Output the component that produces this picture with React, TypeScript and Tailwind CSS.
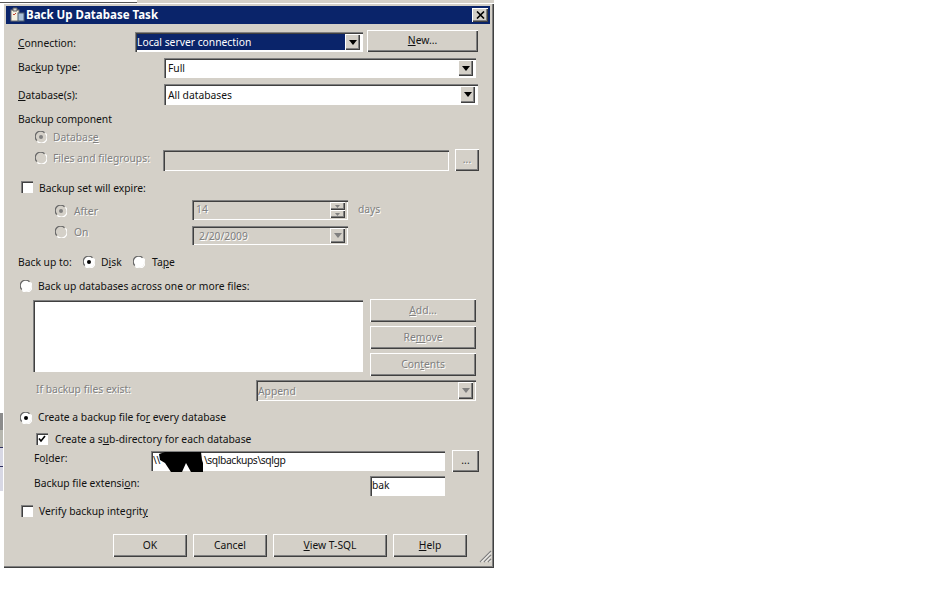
import type { ReactNode } from "react"

const RAISED = "bg-[#d4d0c8] shadow-[inset_1px_1px_0_#ffffff,inset_-1px_-1px_0_#404040,inset_-2px_-2px_0_#808080]"
const SUNKEN = "shadow-[inset_1px_1px_0_#808080,inset_2px_2px_0_#404040,inset_-1px_-1px_0_#ffffff]"
const DISABLED = "text-[#808080] [text-shadow:1px_1px_0_#ffffff]"

function Radio({ on, disabled, className = "" }: { on?: boolean; disabled?: boolean; className?: string }) {
  return (
    <svg width="12" height="12" viewBox="0 0 12 12" className={`shrink-0 ${className}`}>
      <circle cx="6" cy="6" r="5.5" fill={disabled ? "#d4d0c8" : "#ffffff"} />
      <path d="M1.8 9.5A5.3 5.3 0 0 1 9.5 1.8" fill="none" stroke="#6a6a6a" strokeWidth="1.3" />
      <path d="M2.4 10.4A5.3 5.3 0 0 0 10.4 2.4" fill="none" stroke="#ffffff" strokeWidth="1.3" />
      {on && <circle cx="6" cy="6" r="2" fill={disabled ? "#808080" : "#000000"} />}
    </svg>
  )
}

function Check({ on }: { on?: boolean }) {
  return (
    <div className={`w-3 h-3 shrink-0 bg-white flex items-center justify-center ${SUNKEN}`}>
      {on && (
        <svg width="8" height="8" viewBox="0 0 8 8">
          <path d="M1 3.5 3 6 7 1" fill="none" stroke="#000000" strokeWidth="1.6" />
        </svg>
      )}
    </div>
  )
}

function Btn({ className, children, disabled }: { className: string; children: ReactNode; disabled?: boolean }) {
  return (
    <div className={`flex items-center justify-center shrink-0 ${RAISED} ${disabled ? DISABLED : ""} ${className}`}>
      {children}
    </div>
  )
}

function Arrow({ disabled, w = 8 }: { disabled?: boolean; w?: number }) {
  return (
    <svg width={w} height="5" viewBox="0 0 8 5">
      <path d="M0 0H8L4 5Z" fill={disabled ? "#808080" : "#000000"} />
    </svg>
  )
}

function Combo({ className, text, selected, disabled, pad = "pl-[2px]" }: { className: string; text: string; selected?: boolean; disabled?: boolean; pad?: string }) {
  return (
    <div className={`flex items-center shrink-0 p-[2px] pr-[3px] ${SUNKEN} ${disabled ? "" : "bg-white"} ${className}`}>
      <div className={`flex-1 leading-none pt-px ${selected ? "bg-[#0a246a] text-white h-full flex items-center" : pad} ${disabled ? DISABLED : ""}`}>
        {text}
      </div>
      <div className={`w-[15px] h-full flex items-center justify-center ${RAISED}`}>
        <Arrow disabled={disabled} />
      </div>
    </div>
  )
}

export default function App() {
  return (
    <div className="w-[948px] h-[614px] bg-white overflow-hidden font-['Noto_Sans','Liberation_Sans',sans-serif] text-[10.3px] text-[#111111]">
      <div className="h-[3px] flex">
        <div className="w-[137px] h-px mt-[2px] bg-[#555555]" />
        <div className="w-[357px] bg-[#d4d0c8]" />
      </div>
      <div className="flex">
        <div className="w-[3px] flex flex-col pt-[410px]">
          <div className="h-[17px] bg-[#8c8c8c]" />
          <div className="h-[17px] bg-[#b8b8b0]" />
          <div className="h-px bg-[#303060]" />
          <div className="h-[18px] bg-[#d8d8e4]" />
          <div className="h-px bg-[#303060]" />
          <div className="h-[24px] bg-[#d8d8e4]" />
        </div>
        <div className="w-[491px] h-[565px] bg-[#d4d0c8] px-[3px] pt-[3px] shadow-[inset_1px_1px_0_#ffffff,inset_-1px_-1px_0_#404040,inset_-2px_-2px_0_#808080]">
          <div className="h-[18px] w-[484px] bg-[#0a246a] flex items-center pl-[3px] pr-[2px] text-white font-bold text-[11.5px]">
            <svg width="16" height="16" viewBox="0 0 16 16" className="shrink-0">
              <rect x="2" y="3" width="8" height="11" fill="#f4f0e0" stroke="#707070" />
              <rect x="9" y="6" width="6" height="8" fill="#a8c0d8" stroke="#506070" />
              <path d="M4 1h4v3H4z" fill="#d0d0d0" stroke="#606060" />
              <path d="M4 7l1 1 2-2" fill="none" stroke="#c04030" />
            </svg>
            <span className="ml-px flex-1">Back Up Database Task</span>
            <div className={`w-4 h-[14px] flex items-center justify-center ${RAISED}`}>
              <svg width="9" height="8" viewBox="0 0 9 8">
                <path d="M1 0.5 8 7.5M8 0.5 1 7.5" stroke="#000000" strokeWidth="1.6" />
              </svg>
            </div>
          </div>

          <div className="flex items-start mt-[6px] pl-[12px] h-[22px]">
            <div className="w-[117px] pt-[6px]"><u>C</u>onnection:</div>
            <Combo className="w-[228px] h-[20px] mt-[2px]" text="Local server connection" selected />
            <Btn className="w-[111px] h-[22px] ml-[4px]"><span><u>N</u>ew...</span></Btn>
          </div>
          <div className="flex items-center mt-[6px] pl-[12px] h-[20px]">
            <div className="w-[146px] mb-px">Bac<u>k</u>up type:</div>
            <Combo className="w-[312px] h-[20px]" text="Full" />
          </div>
          <div className="flex items-center mt-[6px] pl-[12px] h-[21px]">
            <div className="w-[146px] mt-[2px]"><u>D</u>atabase(s):</div>
            <Combo className="w-[314px] h-[21px]" text="All databases" />
          </div>
          <div className="mt-[6px] pl-[12px] pt-px h-[16px]">Backup component</div>

          <div className={`flex items-center mt-[3px] pl-[29px] h-[14px] gap-[6px] ${DISABLED}`}>
            <Radio on disabled /><span className="mt-[2px]">Databas<u>e</u></span>
          </div>
          <div className="flex items-center mt-[5px] pl-[29px] h-[22px]">
            <Radio disabled className="mb-[4px]" />
            <span className={`ml-[6px] w-[110px] mb-[2px] ${DISABLED}`}>Files and file<u>g</u>roups:</span>
            <div className={`w-[286px] h-[21px] ${SUNKEN}`} />
            <Btn className="w-[24px] h-[22px] ml-[6px]" disabled>...</Btn>
          </div>

          <div className="flex items-center mt-[9px] pl-[15px] h-[14px] gap-[6px]">
            <Check /><span className="mt-[4px]">Backup set will expire:</span>
          </div>
          <div className="flex items-center mt-[6px] pl-[49px] h-[20px]">
            <Radio on disabled className="mt-[2px]" />
            <span className={`ml-[7px] w-[118px] mt-[4px] ${DISABLED}`}>After</span>
            <div className={`w-[156px] h-[20px] flex items-center p-[2px] pr-[3px] ${SUNKEN}`}>
              <span className={`flex-1 pl-[2px] ${DISABLED}`}>14</span>
              <div className="w-[15px] h-full flex flex-col">
                <div className={`flex-1 flex items-center justify-center ${RAISED}`}><Arrow disabled w={5} /></div>
                <div className={`flex-1 flex items-center justify-center ${RAISED}`}><Arrow disabled w={5} /></div>
              </div>
            </div>
            <span className={`ml-[10px] ${DISABLED}`}>days</span>
          </div>
          <div className="flex items-center mt-[6px] pl-[49px] h-[19px]">
            <Radio disabled className="mb-[8px]" />
            <span className={`ml-[7px] w-[118px] mb-[6px] ${DISABLED}`}>On</span>
            <Combo className="w-[156px] h-[19px]" text="2/20/2009" disabled pad="pl-[5px]" />
          </div>

          <div className="flex items-center mt-[9px] pl-[12px] h-[16px]">
            <span className="w-[65px] mt-[2px]">Back up to:</span>
            <Radio on /><span className="ml-[6px] w-[32px] mt-[2px]">D<u>i</u>sk</span>
            <Radio /><span className="ml-[7px] mt-[2px]">Ta<u>p</u>e</span>
          </div>
          <div className="flex items-center mt-[8px] pl-[14px] h-[16px] gap-[6px]">
            <Radio /><span className="mt-[2px]">Back up databases across one or more files:</span>
          </div>

          <div className="flex items-start mt-[5px] pl-[27px] h-[77px]">
            <div className={`w-[330px] h-[72px] mt-px bg-white ${SUNKEN}`} />
            <div className="flex flex-col gap-[4px] ml-[7px]">
              <Btn className="w-[106px] h-[23px]" disabled><span><u>A</u>dd...</span></Btn>
              <Btn className="w-[106px] h-[23px]" disabled><span>Re<u>m</u>ove</span></Btn>
              <Btn className="w-[106px] h-[23px]" disabled><span>Con<u>t</u>ents</span></Btn>
            </div>
          </div>
          <div className="flex items-center mt-[4px] pl-[30px] h-[21px]">
            <span className={`w-[220px] mb-[2px] ${DISABLED}`}>If backup files exist:</span>
            <Combo className="w-[220px] h-[21px]" text="Append" disabled pad="pl-0" />
          </div>

          <div className="flex items-center mt-[9px] pl-[14px] h-[16px] gap-[6px]">
            <Radio on /><span>Create a backup file fo<u>r</u> every database</span>
          </div>
          <div className="flex items-center mt-[6px] pl-[30px] h-[14px] gap-[7px]">
            <Check on /><span className="mt-[2px]">Create a s<u>u</u>b-directory for each database</span>
          </div>
          <div className="flex items-center mt-[4px] pl-[28px] h-[22px]">
            <span className="w-[117px] mb-[4px]">Fo<u>l</u>der:</span>
            <div className={`relative w-[294px] h-[20px] bg-white flex items-center pl-[2px] ${SUNKEN}`}>
              <span className="tracking-[-0.4px]">\\<span className="inline-block w-[44px]" />\sqlbackups\sqlgp</span>
              {/* redaction scribble over the server name */}
              <svg width="46" height="21" viewBox="0 0 46 21" className="absolute left-[6px] top-0">
                <path d="M2 3 8 1H44L45 9 49 21H34L29 12 25 21H14L8 12 3 9Z" fill="#000000" />
              </svg>
            </div>
            <Btn className="w-[27px] h-[22px] ml-[7px]">...</Btn>
          </div>
          <div className="flex items-center mt-[4px] pl-[28px] h-[20px]">
            <span className="w-[336px] mb-[4px]">Backup file extensi<u>o</u>n:</span>
            <div className={`w-[75px] h-[20px] bg-white flex items-center pl-[2px] ${SUNKEN}`}>bak</div>
          </div>

          <div className="flex items-center mt-[8px] pl-[15px] h-[14px] gap-[6px]">
            <Check /><span className="mt-[2px]">Verify backup integrit<u>y</u></span>
          </div>

          <div className="relative flex mt-[16px] pl-[107px] gap-[6px]">
            <Btn className="w-[74px] h-[23px]">OK</Btn>
            <Btn className="w-[74px] h-[23px]">Cancel</Btn>
            <Btn className="w-[114px] h-[23px]"><span><u>V</u>iew T-SQL</span></Btn>
            <Btn className="w-[74px] h-[23px]"><span><u>H</u>elp</span></Btn>
            <svg width="14" height="14" viewBox="0 0 14 14" className="absolute right-[-1px] top-[15px]">
              <path d="M13 2 2 13M13 6 6 13M13 10 10 13" stroke="#808080" strokeWidth="1.2" />
              <path d="M13 3.5 3.5 13M13 7.5 7.5 13M13 11.5 11.5 13" stroke="#ffffff" strokeWidth="1" />
            </svg>
          </div>
        </div>
      </div>
    </div>
  )
}
